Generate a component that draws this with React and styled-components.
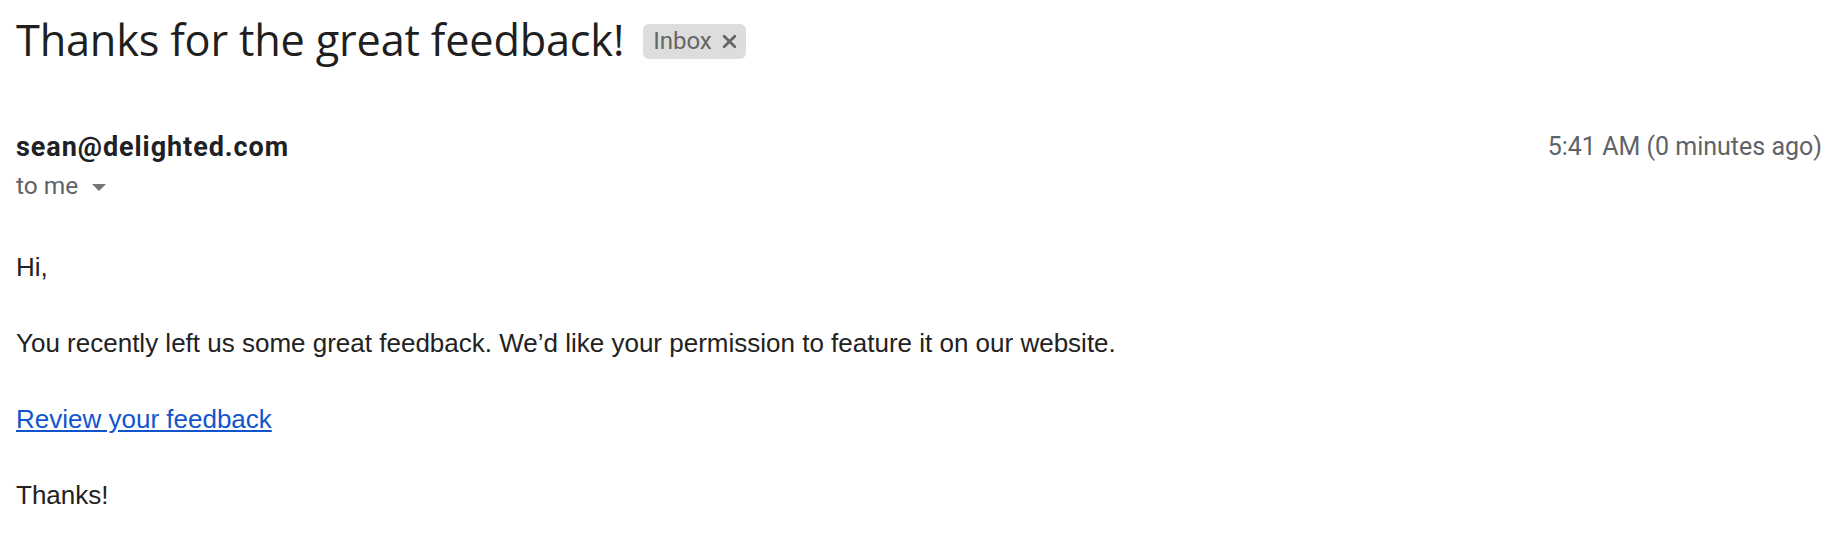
import React from "react";
import styled, { createGlobalStyle } from "styled-components";

const GlobalStyle = createGlobalStyle`
  html, body {
    margin: 0;
    padding: 0;
    background: #ffffff;
  }
  body {
    font-family: Roboto, "Liberation Sans", Arial, sans-serif;
    -webkit-font-smoothing: antialiased;
  }
`

const Page = styled.div`
  width: 1834px;
  height: 534px;
  box-sizing: border-box;
  padding: 14px 12px 0 16px;
  overflow: hidden;
`

const SubjectRow = styled.div`
  display: flex;
  align-items: center;
  gap: 19px;
  height: 52px;
`

const Subject = styled.h2`
  margin: 0;
  font-family: "Open Sans", Roboto, sans-serif;
  font-weight: 400;
  font-size: 43.3px;
  line-height: 52px;
  color: #1f1f1f;
  letter-spacing: -0.2px;
`

const Chip = styled.span`
  display: inline-flex;
  align-items: center;
  gap: 10px;
  height: 35px;
  padding: 0 9px 0 10px;
  border-radius: 6px;
  background: #dddddd;
  color: #666666;
  font-size: 24px;
  margin-top: 2px;
`

const ChipClose = styled.svg`
  width: 15px;
  height: 15px;
`

const HeaderRow = styled.div`
  display: flex;
  justify-content: space-between;
  align-items: flex-start;
  margin-top: 66px;
`

const SenderBlock = styled.div`
  display: flex;
  flex-direction: column;
`

const Sender = styled.div`
  font-weight: 700;
  font-size: 27px;
  line-height: 30px;
  color: #202124;
  letter-spacing: 0.93px;
`

const Recipient = styled.div`
  display: flex;
  align-items: center;
  gap: 14px;
  margin-top: 10px;
  font-size: 24.5px;
  line-height: 28px;
  color: #5f6368;
`

const Caret = styled.span`
  width: 0;
  height: 0;
  border-left: 7px solid transparent;
  border-right: 7px solid transparent;
  border-top: 7px solid #757575;
  margin-top: 2px;
`

const Time = styled.div`
  font-size: 25px;
  line-height: 30px;
  color: #5f6368;
`

const Body = styled.div`
  margin-top: 48px;
  font-family: "Liberation Sans", Arial, sans-serif;
  font-size: 26px;
  line-height: 38px;
  color: #222222;
`

const Line = styled.p`
  margin: 0 0 38px;
`

const Link = styled.a`
  color: #1155cc;
  text-decoration: underline;
`

export default function App() {
  return (
    <>
      <GlobalStyle />
      <Page>
        <SubjectRow>
          <Subject>Thanks for the great feedback!</Subject>
          <Chip>
            Inbox
            <ChipClose viewBox="0 0 14 14">
              <path d="M2 2 L12 12 M12 2 L2 12" stroke="#666666" strokeWidth="2.6" strokeLinecap="round" />
            </ChipClose>
          </Chip>
        </SubjectRow>

        <HeaderRow>
          <SenderBlock>
            <Sender>sean@delighted.com</Sender>
            <Recipient>
              to me
              <Caret />
            </Recipient>
          </SenderBlock>
          <Time>5:41 AM (0 minutes ago)</Time>
        </HeaderRow>

        <Body>
          <Line>Hi,</Line>
          <Line>You recently left us some great feedback. We’d like your permission to feature it on our website.</Line>
          <Line><Link href="#">Review your feedback</Link></Line>
          <Line>Thanks!</Line>
        </Body>
      </Page>
    </>
  )
}
